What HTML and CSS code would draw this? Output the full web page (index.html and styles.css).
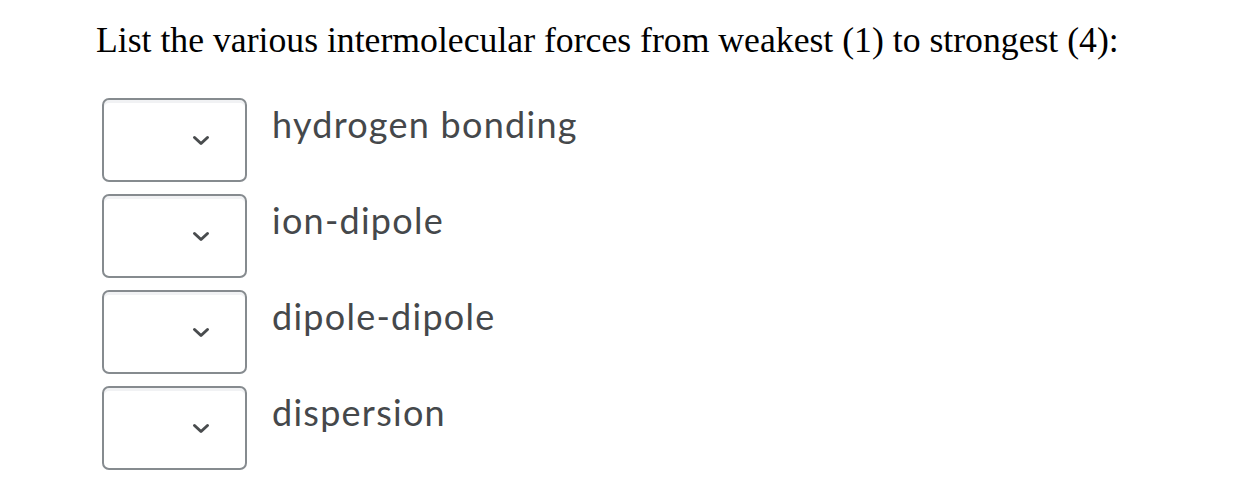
FILE: index.html
```html
<!DOCTYPE html>
<html lang="en">
<head>
  <meta charset="UTF-8" />
  <title>Ordering question</title>
  <link rel="stylesheet" href="styles.css">
</head>
<body>
  <div class="question">
    <p class="prompt">List the various intermolecular forces from weakest (1) to strongest (4):</p>

    <ul class="order-list">
      <li class="order-row">
        <div class="order-select">
          <svg class="chevron" viewBox="0 0 18 11"><path d="M2.5 2.5 L9 8.5 L15.5 2.5" /></svg>
        </div>
        <span class="order-label">hydrogen bonding</span>
      </li>
      <li class="order-row">
        <div class="order-select">
          <svg class="chevron" viewBox="0 0 18 11"><path d="M2.5 2.5 L9 8.5 L15.5 2.5" /></svg>
        </div>
        <span class="order-label">ion-dipole</span>
      </li>
      <li class="order-row">
        <div class="order-select">
          <svg class="chevron" viewBox="0 0 18 11"><path d="M2.5 2.5 L9 8.5 L15.5 2.5" /></svg>
        </div>
        <span class="order-label">dipole-dipole</span>
      </li>
      <li class="order-row">
        <div class="order-select">
          <svg class="chevron" viewBox="0 0 18 11"><path d="M2.5 2.5 L9 8.5 L15.5 2.5" /></svg>
        </div>
        <span class="order-label">dispersion</span>
      </li>
    </ul>
  </div>
</body>
</html>
```

FILE: styles.css
```css
body {
  margin: 0;
  background: #fff;
}

.question {
  padding: 20px 0 0 96px;
}

.prompt {
  margin: 0 0 38px;
  font-family: "Liberation Serif", "Times New Roman", serif;
  font-size: 35.7px;
  line-height: 40px;
  color: #000;
}

.order-list {
  list-style: none;
  margin: 0;
  padding: 0 0 0 6px;
  display: flex;
  flex-direction: column;
  gap: 12px;
}

.order-row {
  display: flex;
  align-items: flex-start;
  gap: 25px;
}

/* empty rank dropdown */
.order-select {
  width: 106px;
  height: 80px;
  padding-right: 35px;
  border: 2px solid #868b8f;
  border-radius: 7px;
  box-shadow: inset 0 3px 0 0 #f1f2f4;
  display: flex;
  align-items: center;
  justify-content: flex-end;
}

.chevron {
  width: 18px;
  height: 11px;
  fill: none;
  stroke: #494c4e;
  stroke-width: 3;
  stroke-linecap: round;
  stroke-linejoin: round;
}

.order-label {
  font-family: Lato, "Noto Sans", sans-serif;
  font-size: 36px;
  line-height: 40px;
  letter-spacing: 0.035em;
  color: #45484b;
  padding-top: 6px;
}
```
